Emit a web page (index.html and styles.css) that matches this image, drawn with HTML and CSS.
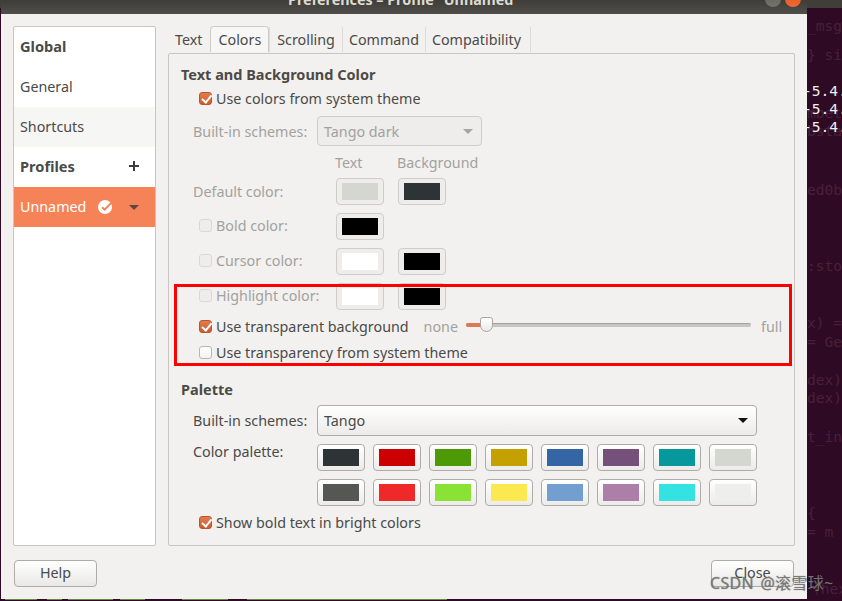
FILE: index.html
```html
<!DOCTYPE html>
<html lang="en">
<head>
<meta charset="utf-8">
<title>Preferences</title>
<link rel="stylesheet" href="styles.css">
</head>
<body>
<div class="desktop">
  <div class="term-bar"></div>
  <div class="term-text">
    <span class="t t1">_msg</span><span class="t t2">} sign</span>
    <span class="t t16">mbet</span><span class="t t17">bsta</span>
    <span class="t t3 bright">-5.4.</span><span class="t t4 bright">-5.4.</span><span class="t t5 bright">-5.4.</span>
    <span class="t t6">ed0b</span><span class="t t7">:sto</span><span class="t t8">x) =</span><span class="t t9">= Ge</span>
    <span class="t t10">dex)</span><span class="t t11">dex)</span><span class="t t12">t_in</span><span class="t t13">{</span><span class="t t14">= m</span><span class="t t15">(hex</span>
  </div>
  <div class="term-strip"></div>
  <div class="window">
    <header class="titlebar">
      <span class="title">Preferences – Profile “Unnamed”</span>
      <span class="wbtn wmin"></span>
      <span class="wbtn wclose"></span>
    </header>
    <div class="content">
      <nav class="sidebar">
        <div class="item bold">Global</div>
        <div class="item">General</div>
        <div class="item hover">Shortcuts</div>
        <div class="item bold between">Profiles
          <svg class="plus" width="12" height="12" viewBox="0 0 12 12"><path d="M6 1v10M1 6h10" stroke="#3c3c3c" stroke-width="2"/></svg>
        </div>
        <div class="item selected">Unnamed
          <svg class="badge" width="14" height="14" viewBox="0 0 14 14"><circle cx="7" cy="7" r="7" fill="#fff"/><path d="M4.2 7.2l2.4 2.4 6.9-6.9" fill="none" stroke="#f58357" stroke-width="2"/></svg>
          <span class="caret dark"></span>
        </div>
      </nav>
      <main class="main">
        <div class="tabs">
          <span class="tab first">Text</span>
          <span class="tab active">Colors</span>
          <span class="tab sep">Scrolling</span>
          <span class="tab sep cmd">Command</span>
          <span class="tab sep last">Compatibility</span>
        </div>
        <section class="panel">
          <h2 class="heading">Text and Background Color</h2>
          <label class="check-row top-check"><span class="check on"></span>Use colors from system theme</label>
          <div class="scheme-row muted">
            <span class="scheme-label">Built-in schemes:</span>
            <span class="combo disabled">Tango dark<span class="caret grey"></span></span>
          </div>
          <div class="col-heads muted"><span class="col-text">Text</span><span>Background</span></div>
          <div class="color-row muted"><span class="color-label plain-label">Default color:</span>
            <span class="swatch flat"><i class="fill c-d3d7cf"></i></span><span class="swatch flat"><i class="fill c-2e3436"></i></span></div>
          <div class="color-row muted"><span class="color-label checked-label"><span class="check off"></span>Bold color:</span>
            <span class="swatch flat"><i class="fill c-000"></i></span></div>
          <div class="color-row muted"><span class="color-label checked-label"><span class="check off"></span>Cursor color:</span>
            <span class="swatch flat"><i class="fill c-fff"></i></span><span class="swatch flat"><i class="fill c-000"></i></span></div>
          <div class="color-row muted"><span class="color-label checked-label"><span class="check off"></span>Highlight color:</span>
            <span class="swatch flat"><i class="fill c-fff"></i></span><span class="swatch flat"><i class="fill c-000"></i></span></div>
          <div class="slider-row">
            <label class="check-row"><span class="check on"></span>Use transparent background</label>
            <span class="muted none">none</span>
            <span class="slider"><span class="slider-fill"></span><span class="thumb"></span></span>
            <span class="muted full">full</span>
          </div>
          <label class="check-row sys-row"><span class="check empty"></span>Use transparency from system theme</label>

          <h2 class="heading palette-head">Palette</h2>
          <div class="scheme-row palette-scheme">
            <span class="scheme-label">Built-in schemes:</span>
            <span class="combo wide">Tango<span class="caret black"></span></span>
          </div>
          <div class="palette-row">
            <span class="scheme-label palette-label">Color palette:</span>
            <div class="palette">
              <span class="swatch"><i class="fill c-2e3436"></i></span>
              <span class="swatch"><i class="fill c-cc0000"></i></span>
              <span class="swatch"><i class="fill c-4e9a06"></i></span>
              <span class="swatch"><i class="fill c-c4a000"></i></span>
              <span class="swatch"><i class="fill c-3465a4"></i></span>
              <span class="swatch"><i class="fill c-75507b"></i></span>
              <span class="swatch"><i class="fill c-06989a"></i></span>
              <span class="swatch"><i class="fill c-d3d7cf"></i></span>
              <span class="swatch"><i class="fill c-555753"></i></span>
              <span class="swatch"><i class="fill c-ef2929"></i></span>
              <span class="swatch"><i class="fill c-8ae234"></i></span>
              <span class="swatch"><i class="fill c-fce94f"></i></span>
              <span class="swatch"><i class="fill c-729fcf"></i></span>
              <span class="swatch"><i class="fill c-ad7fa8"></i></span>
              <span class="swatch"><i class="fill c-34e2e2"></i></span>
              <span class="swatch"><i class="fill c-eeeeec"></i></span>
            </div>
          </div>
          <label class="check-row bold-check"><span class="check on"></span>Show bold text in bright colors</label>
        </section>
      </main>
    </div>
    <footer class="footer">
      <span class="btn">Help</span>
      <span class="btn">Close</span>
    </footer>
  </div>
  <div class="annotation"></div>
  <div class="watermark">CSDN @滚雪球~</div>
</div>
</body>
</html>
```
FILE: styles.css
```css
* { box-sizing: border-box; }
html, body { margin: 0; height: 100%; overflow: hidden; }
body { font-family: "Noto Sans", "Open Sans", sans-serif; font-size: 14.3px; color: #4a4a48; }
.desktop { position: relative; width: 842px; height: 601px; background: #2f0a24; overflow: hidden; }
.term-bar { position: absolute; left: 0; top: 0; width: 842px; height: 8px; background: #3f3e39; }
.term-text { position: absolute; inset: 0; font-family: "DejaVu Sans Mono", monospace; font-size: 14.6px; color: #472139; }
.t { position: absolute; left: 807px; line-height: 18px; white-space: nowrap; }
.bright { color: #eeeeec; left: 803px; }
.t1 { top: 17px; } .t2 { top: 46px; } .t3 { top: 82px; } .t4 { top: 100px; } .t5 { top: 118px; }
.t6 { top: 181px; } .t7 { top: 257px; } .t8 { top: 314px; } .t9 { top: 333px; } .t10 { top: 371px; }
.t11 { top: 389px; } .t12 { top: 428px; } .t13 { top: 504px; } .t14 { top: 523px; } .t15 { top: 580px; left: 812px; }
.t16 { top: 104px; } .t17 { top: 122px; }
.term-strip { position: absolute; left: 0; top: 599px; width: 842px; height: 1px;
  background: linear-gradient(90deg,
    transparent 5px, #5f8f3c 5px, #5f8f3c 37px, transparent 37px,
    transparent 47px, #5f8f3c 47px, #5f8f3c 62px, transparent 62px,
    transparent 68px, #5f8f3c 68px, #5f8f3c 113px, transparent 113px,
    transparent 120px, #5f8f3c 120px, #5f8f3c 145px, transparent 145px,
    transparent 182px, #5f8f3c 182px, #5f8f3c 228px, transparent 228px,
    transparent 247px, #5f8f3c 247px, #5f8f3c 447px, transparent 447px); }

.window { position: absolute; left: 1px; top: 0; width: 806px; height: 599px; background: #f2f1ef; display: flex; flex-direction: column; }
.titlebar { position: relative; height: 14px; flex: none; background: linear-gradient(#3e3d39, #4f4e49); overflow: hidden; }
.title { position: absolute; left: 287px; top: -10px; font-size: 14.3px; font-weight: 700; line-height: 20px; color: #dfdbd2; white-space: nowrap; }
.wbtn { position: absolute; top: -9px; width: 16px; height: 16px; border-radius: 50%; }
.wmin { left: 764px; background: linear-gradient(#5f5e59, #74736d); }
.wclose { left: 784px; background: linear-gradient(#e0541f, #ef6a33); }

.content { display: flex; gap: 12px; padding: 12px 12px 0 12px; flex: none; height: 533px; }
.sidebar { width: 143px; height: 520px; background: #fff; border: 1px solid #c8c6c2; border-radius: 2px; flex: none; }
.item { height: 40px; padding: 0 6px 2px; display: flex; align-items: center; color: #4a4a48; }
.bold { font-weight: 700; font-size: 14.6px; }
.hover { background: #f6f6f5; }
.between { justify-content: space-between; padding-right: 15px; }
.selected { background: #f58357; color: #fff; position: relative; }
.badge { position: absolute; left: 84px; top: 13px; }
.caret { width: 0; height: 0; border-left: 5px solid transparent; border-right: 5px solid transparent; }
.caret.dark { position: absolute; left: 115px; top: 18px; border-top: 5px solid #5a4a44; }
.caret.grey { border-top: 5px solid #a5a4a1; margin-left: auto; margin-right: 2px; }
.caret.black { border-top: 5px solid #111; margin-left: auto; margin-right: 2px; }

.main { width: 627px; flex: none; display: flex; flex-direction: column; }
.tabs { height: 26px; display: flex; margin-top: 1px; flex: none; }
.tab { height: 25px; padding: 0 7px; display: flex; align-items: center; border-left: 1px solid transparent; white-space: nowrap; }
.tab.first { border-left: 0; padding: 0 7px 0 7px; }
.tab.sep { border-left-color: #dddbd8; }
.tab.cmd { width: 83px; padding-left: 6px; padding-right: 0; }
.tab.last { width: 106px; border-right: 1px solid #dddbd8; padding-left: 6px; padding-right: 0; }
.tab.active { background: linear-gradient(#f7f7f6, #f7f6f5); border: 1px solid #cdcbc7; border-bottom: 0; border-radius: 4px 4px 0 0; margin: -1px 0 0 1px; height: 26px; padding: 0 7px; }
.panel { height: 493px; border: 1px solid #c8c6c2; border-radius: 2px; padding: 10px 0 0 12px; background: #f2f1ef; }

.heading { margin: 0; height: 20px; font-size: 14.5px; font-weight: 700; line-height: 20px; color: #4c4a46; }
.check-row { display: flex; align-items: center; height: 20px; white-space: nowrap; }
.top-check { margin: 4px 0 0 18px; }
.check { width: 13px; height: 13px; border-radius: 3px; margin-right: 4px; flex: none; display: inline-block; position: relative; }
.check.on { background: linear-gradient(#e27c50, #cf5b2e); border: 1px solid #b9552c; }
.check.on::after { content: ""; position: absolute; left: 3.5px; top: 0.5px; width: 4px; height: 7.5px; border: solid #fff; border-width: 0 2px 2px 0; transform: rotate(40deg); }
.check.off { background: #eeedeb; border: 1px solid #d9d8d5; }
.check.empty { background: linear-gradient(#fff, #f3f2f1); border: 1px solid #b9b7b3; }
.muted { color: #a3a19e; }

.scheme-row { display: flex; align-items: center; height: 30px; margin: 8px 0 0 12px; }
.scheme-label { width: 124px; flex: none; }
.palette-scheme .scheme-label { padding-bottom: 1px; }
.combo { width: 165px; height: 30px; display: flex; align-items: center; padding: 0 6px; border-radius: 4px; }
.combo.disabled { background: #eeedeb; border: 1px solid #cfcdca; }
.combo.wide { width: 440px; height: 31px; border: 1px solid #aeaca8; background: linear-gradient(#fff, #ecebe9); color: #4a4a48; }

.col-heads { display: flex; height: 20px; margin: 7px 0 0 154px; }
.col-text { width: 62px; }
.color-row { display: flex; align-items: center; height: 27px; margin: 0 0 8px 12px; gap: 14px; }
.col-heads + .color-row { margin-top: 5px; }
.color-label { width: 129px; flex: none; display: flex; align-items: center; padding-bottom: 2px; white-space: nowrap; }
.plain-label { padding-bottom: 0; }
.checked-label { padding-left: 6px; }
.swatch { width: 48px; height: 27px; padding: 4px 5px; border: 1px solid #aeaca8; border-radius: 4px; background: linear-gradient(#fff, #ecebe9); display: block; flex: none; }
.swatch.flat { background: #eeedeb; border-color: #cfcdca; }
.fill { display: block; width: 100%; height: 100%; }

.slider-row { display: flex; align-items: center; height: 20px; margin: -2px 0 0 18px; }
.none { margin-left: 15px; }
.slider { position: relative; width: 285px; height: 4px; margin: 0 0 2px 8px; border-radius: 2px; background: #c6c5c2; border-top: 1px solid #a5a4a0; }
.slider-fill { position: absolute; left: 0; top: -1px; width: 16px; height: 4px; background: #dd7a52; border-radius: 2px 0 0 2px; }
.thumb { position: absolute; left: 14px; top: -7px; width: 13px; height: 15px; background: linear-gradient(#fff, #eceae8); border: 1px solid #a8a6a2; border-radius: 3px 3px 7px 7px; }
.full { margin-left: 10px; }
.sys-row { margin: 6px 0 0 18px; }

.palette-head { margin-top: 17px; }
.palette-scheme { margin-top: 6px; height: 31px; }
.palette-row { display: flex; margin: 8px 0 0 12px; }
.palette-label { line-height: 16px; }
.palette { display: grid; grid-template-columns: repeat(8, 48px); column-gap: 8px; row-gap: 8px; }
.bold-check { margin: 6px 0 0 18px; }

.footer { flex: none; display: flex; justify-content: space-between; padding: 13px 13px 0 13px; }
.btn { width: 83px; height: 27px; padding-bottom: 2px; display: flex; align-items: center; justify-content: center; border: 1px solid #aeaca8; border-radius: 4px; background: linear-gradient(#fff, #e9e8e6); color: #4a4a48; }

.c-d3d7cf { background: #d3d7cf; } .c-2e3436 { background: #2e3436; } .c-000 { background: #000; } .c-fff { background: #fff; }
.c-cc0000 { background: #cc0000; } .c-4e9a06 { background: #4e9a06; } .c-c4a000 { background: #c4a000; } .c-3465a4 { background: #3465a4; }
.c-75507b { background: #75507b; } .c-06989a { background: #06989a; } .c-555753 { background: #555753; } .c-ef2929 { background: #ef2929; }
.c-8ae234 { background: #8ae234; } .c-fce94f { background: #fce94f; } .c-729fcf { background: #729fcf; } .c-ad7fa8 { background: #ad7fa8; }
.c-34e2e2 { background: #34e2e2; } .c-eeeeec { background: #eeeeec; }

.annotation { position: absolute; left: 174px; top: 284px; width: 618px; height: 82px; border: 3px solid #fe0000; }
.watermark { position: absolute; left: 710px; top: 572px; font-family: "Noto Sans", "Noto Sans CJK SC", sans-serif; font-size: 16px; letter-spacing: 0.3px; word-spacing: 2px; line-height: 22px; color: rgba(120, 120, 120, 0.95); text-shadow: 0 0 1px rgba(50, 50, 50, 0.55); white-space: nowrap; }
```
